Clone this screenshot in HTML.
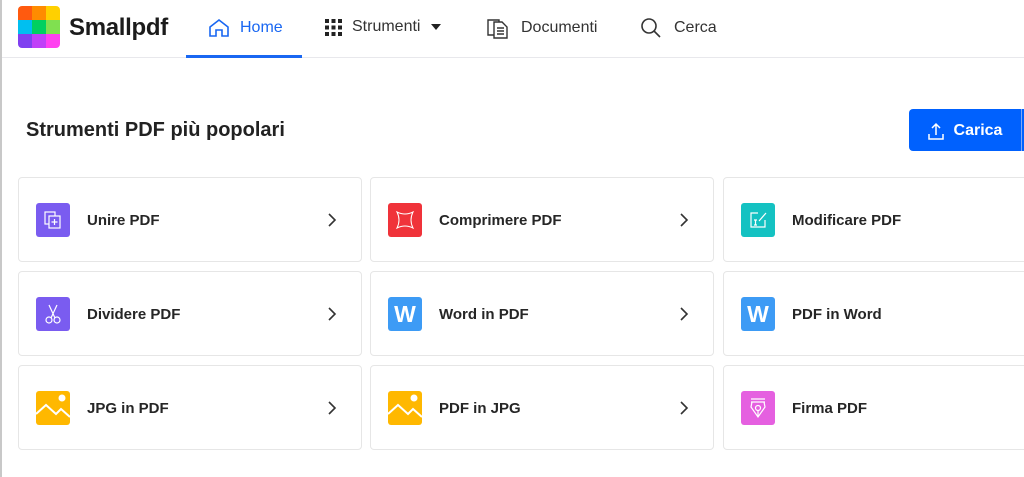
<!DOCTYPE html>
<html><head><meta charset="utf-8"><style>
*{box-sizing:border-box;margin:0;padding:0}
body{width:1024px;height:477px;overflow:hidden;background:#fff;font-family:"Liberation Sans",sans-serif;color:#222;position:relative}
.lb{position:absolute;left:0;top:0;width:2px;height:477px;background:#c8c8c8}
.hdr{position:absolute;left:0;top:0;width:1024px;height:58px;border-bottom:1px solid #e8e8ec}
.logo{position:absolute;left:18px;top:6px;width:42px;height:42px;border-radius:4px;overflow:hidden;display:grid;grid-template-columns:repeat(3,14px);grid-template-rows:repeat(3,14px)}
.brand{position:absolute;left:69px;top:14px;font-size:24px;font-weight:bold;color:#1b1b1b;letter-spacing:-0.3px}
.nav{position:absolute;top:17px;font-size:16px;color:#333;display:flex;align-items:center;gap:10px}
.ul{position:absolute;left:186px;top:55px;width:116px;height:3px;background:#1967f2}
h1{position:absolute;left:26px;top:119px;font-size:20px;font-weight:bold;color:#222}
.btn{position:absolute;left:909px;top:109px;width:112px;height:42px;background:#0061fe;border-radius:4px 0 0 4px;color:#fff;font-weight:bold;font-size:16px;display:flex;align-items:center;justify-content:center;gap:10px;padding-top:2px}
.btn2{position:absolute;left:1021px;top:109px;width:3px;height:42px;background:#0061fe;border-left:1px solid #7fa8f6}
.card{position:absolute;width:344px;height:85px;border:1px solid #e6e6e6;border-radius:4px;background:#fff}
.ic{position:absolute;left:17px;top:25px;width:34px;height:34px;border-radius:3px;display:flex;align-items:center;justify-content:center}
.w{background:#3d9bf5;color:#fff;font-weight:bold;font-size:23px;padding-top:1px}
.t{position:absolute;left:68px;top:34px;font-size:15px;font-weight:bold;color:#262626}
.ch{position:absolute;left:308px;top:35px}
</style></head><body>
<div class="hdr"></div>
<div class="lb"></div>
<div class="logo">
<div style="background:#ff5a0f"></div><div style="background:#ff8c00"></div><div style="background:#ffd000"></div>
<div style="background:#00bff0"></div><div style="background:#00d060"></div><div style="background:#80e050"></div>
<div style="background:#8040f0"></div><div style="background:#c040f8"></div><div style="background:#ff40f0"></div>
</div>
<div class="brand">Smallpdf</div>
<div class="nav" style="left:208px;color:#1967f2;top:18px"><svg width="22" height="20" viewBox="0 0 22 20" fill="none" stroke="#1967f2" stroke-width="1.6"><path d="M2 9 L11 2 L20 9 V18 H14 V12 H8 V18 H2 Z"/></svg>Home</div>
<div class="ul"></div>
<div class="nav" style="left:325px;top:18px"><svg width="17" height="17" viewBox="0 0 17 17" fill="#222"><rect x="0" y="0" width="4" height="4"/><rect x="6.5" y="0" width="4" height="4"/><rect x="13" y="0" width="4" height="4"/><rect x="0" y="6.5" width="4" height="4"/><rect x="6.5" y="6.5" width="4" height="4"/><rect x="13" y="6.5" width="4" height="4"/><rect x="0" y="13" width="4" height="4"/><rect x="6.5" y="13" width="4" height="4"/><rect x="13" y="13" width="4" height="4"/></svg><span>Strumenti</span><svg width="12" height="8" viewBox="0 0 12 8"><path d="M1 1 L11 1 L6 7Z" fill="#222"/></svg></div>
<div class="nav" style="left:487px;top:17px"><svg width="22" height="22" viewBox="0 0 22 22" fill="none" stroke="#333" stroke-width="1.4"><path d="M4 3 H12 V18 H1 V3 Z"/><path d="M7 5 H15 L20 10 V21 H7 Z" fill="#fff"/><path d="M10 11 H17 M10 14 H17 M10 17 H17"/></svg><span style="margin-left:2px">Documenti</span></div>
<div class="nav" style="left:640px;top:17px"><svg width="22" height="22" viewBox="0 0 22 22" fill="none" stroke="#333" stroke-width="1.6"><circle cx="9" cy="9" r="7"/><path d="M14 14 L20 20"/></svg><span style="margin-left:2px">Cerca</span></div>
<h1>Strumenti PDF più popolari</h1>
<div class="btn"><svg width="16" height="18" viewBox="0 0 16 18" fill="none" stroke="#fff" stroke-width="1.5"><path d="M8 13 V2 M4 6 L8 2 L12 6 M1 12 V17 H15 V12"/></svg>Carica</div>
<div class="btn2"></div>

<div class="card" style="left:18px;top:177px"><div class="ic" style="background:#7a5cf0"><svg width="20" height="20" viewBox="0 0 20 20" fill="none" stroke="#fff" stroke-width="1.2"><rect x="2" y="2" width="10" height="12"/><rect x="6" y="6" width="11" height="12" fill="#7a5cf0"/><path d="M11.5 9 V15 M8.5 12 H14.5"/></svg></div><div class="t">Unire PDF</div><svg class="ch" width="10" height="14" viewBox="0 0 10 14" fill="none" stroke="#333" stroke-width="1.6"><path d="M2 1 L8 7 L2 13"/></svg></div>
<div class="card" style="left:370px;top:177px"><div class="ic" style="background:#f0333a"><svg width="22" height="22" viewBox="0 0 22 22" fill="none" stroke="#fff" stroke-width="1"><path d="M3 3 Q11 7 19 3 Q15 11 19 19 Q11 15 3 19 Q7 11 3 3Z"/></svg></div><div class="t">Comprimere PDF</div><svg class="ch" width="10" height="14" viewBox="0 0 10 14" fill="none" stroke="#333" stroke-width="1.6"><path d="M2 1 L8 7 L2 13"/></svg></div>
<div class="card" style="left:723px;top:177px;width:310px"><div class="ic" style="background:#14c2c2"><svg width="20" height="20" viewBox="0 0 20 20" fill="none" stroke="#fff" stroke-width="1.2"><path d="M10 3 H3 V17 H17 V10"/><path d="M11 11 L18 3"/><path d="M6 10 H9 M7.5 10 V15 M6 15 H9"/></svg></div><div class="t">Modificare PDF</div></div>

<div class="card" style="left:18px;top:271px"><div class="ic" style="background:#7a5cf0"><svg width="20" height="22" viewBox="0 0 20 22" fill="none" stroke="#fff" stroke-width="1.2"><path d="M6 2 L12 15 M14 2 L8 15"/><circle cx="6" cy="17" r="3"/><circle cx="14" cy="17" r="3"/></svg></div><div class="t">Dividere PDF</div><svg class="ch" width="10" height="14" viewBox="0 0 10 14" fill="none" stroke="#333" stroke-width="1.6"><path d="M2 1 L8 7 L2 13"/></svg></div>
<div class="card" style="left:370px;top:271px"><div class="ic w">W</div><div class="t">Word in PDF</div><svg class="ch" width="10" height="14" viewBox="0 0 10 14" fill="none" stroke="#333" stroke-width="1.6"><path d="M2 1 L8 7 L2 13"/></svg></div>
<div class="card" style="left:723px;top:271px;width:310px"><div class="ic w">W</div><div class="t">PDF in Word</div></div>

<div class="card" style="left:18px;top:365px"><div class="ic" style="background:#ffb800;overflow:hidden"><svg width="34" height="34" viewBox="0 0 34 34"><circle cx="26" cy="7" r="3.5" fill="#fff"/><path d="M0 23 L10 14 L20 23 L25 18 L34 26" fill="none" stroke="#fff" stroke-width="2"/></svg></div><div class="t">JPG in PDF</div><svg class="ch" width="10" height="14" viewBox="0 0 10 14" fill="none" stroke="#333" stroke-width="1.6"><path d="M2 1 L8 7 L2 13"/></svg></div>
<div class="card" style="left:370px;top:365px"><div class="ic" style="background:#ffb800;overflow:hidden"><svg width="34" height="34" viewBox="0 0 34 34"><circle cx="26" cy="7" r="3.5" fill="#fff"/><path d="M0 23 L10 14 L20 23 L25 18 L34 26" fill="none" stroke="#fff" stroke-width="2"/></svg></div><div class="t">PDF in JPG</div><svg class="ch" width="10" height="14" viewBox="0 0 10 14" fill="none" stroke="#333" stroke-width="1.6"><path d="M2 1 L8 7 L2 13"/></svg></div>
<div class="card" style="left:723px;top:365px;width:310px"><div class="ic" style="background:#e560e0"><svg width="20" height="22" viewBox="0 0 20 22" fill="none" stroke="#fff" stroke-width="1.2"><path d="M3 2 H17 M3 5 H17 M4 5 L3 10 L10 20 L17 10 L16 5"/><circle cx="10" cy="11" r="2.5"/><path d="M10 13.5 V20"/></svg></div><div class="t">Firma PDF</div></div>
</body></html>
